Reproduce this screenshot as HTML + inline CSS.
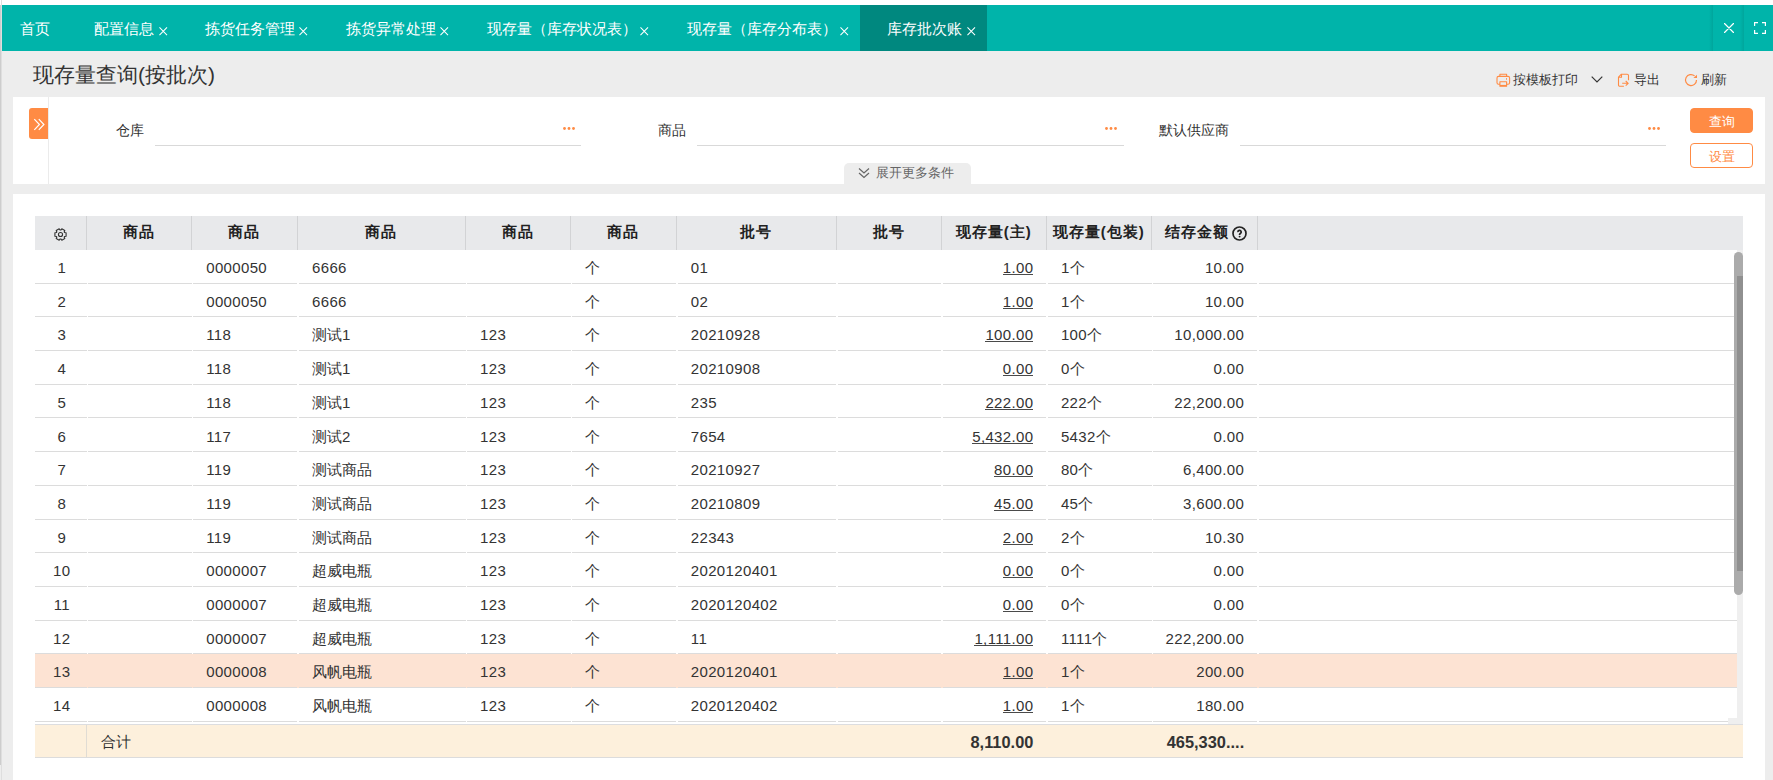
<!DOCTYPE html>
<html><head><meta charset="utf-8">
<style>
*{box-sizing:border-box;margin:0;padding:0}
html,body{width:1773px;height:780px;overflow:hidden;background:#ededed;font-family:"Liberation Sans",sans-serif;color:#333}
.abs{position:absolute}
#topw{left:0;top:0;width:1773px;height:5px;background:#fff}
#edge0{left:0;top:5px;width:1px;height:760px;background:#cdcdcd}
#edge1{left:1px;top:0;width:1px;height:780px;background:#dedede}
#tabs{left:2px;top:5px;width:1771px;height:46px;background:#00b4aa}
.tab{position:absolute;top:1px;height:46px;color:#fff;font-size:15px;line-height:46px;white-space:nowrap}
.tx{position:absolute;top:22px;width:8.5px;height:8.5px}
.act{position:absolute;left:858px;top:0;width:127px;height:46px;background:#00887f}
.sep{position:absolute;top:0;width:4px;height:46px;background:linear-gradient(to right,rgba(0,60,55,0),rgba(0,60,55,0.12))}
#title{left:33px;top:61px;font-size:21px;line-height:28px;color:#333;white-space:nowrap}
.tb{position:absolute;top:71px;font-size:13px;line-height:18px;color:#333;white-space:nowrap}
#filter{left:13px;top:97px;width:1752px;height:87px;background:#fff}
#vline{left:48px;top:97px;width:1px;height:87px;background:#ebebeb}
#obtn{left:29px;top:108px;width:19px;height:31px;background:#ff8b44;border-radius:3px 0 0 3px}
.lbl{position:absolute;top:122px;font-size:13.5px;line-height:18px;color:#333;white-space:nowrap;text-align:right}
.ul{position:absolute;top:145px;height:1px;background:#d9d9d9}
.dots{position:absolute;top:127px;width:12px;height:3px}
.btn{position:absolute;left:1690px;width:63px;height:25px;border-radius:4px;font-size:13px;line-height:25px;text-align:center;border:1px solid #ff8b44}
#q{top:108px;background:#ff8b44;color:#fff}
#s{top:143px;background:#fff;color:#ff8b44}
#more{left:844px;top:163px;width:127px;height:21px;background:#ededed;border-radius:5px 5px 0 0;font-size:12.7px;line-height:20px;color:#666;white-space:nowrap}
#rows{left:0;top:0}
#grid{left:13px;top:194px;width:1752px;height:586px;background:#fff}
#hdr{left:35px;top:216px;width:1708px;height:34px;background:#e8e9eb}
.hc{position:absolute;top:0;height:34px;line-height:32.6px;font-size:15px;font-weight:bold;text-align:center;color:#222;border-right:1px solid #d2d3d5;white-space:nowrap;letter-spacing:1px}
.hc.last{border-right:none}
.row{position:absolute;left:35px;width:1702px;height:33.7px}
.row.hl{background:#fde3d3}
.c{position:absolute;top:0;height:100%;line-height:35.8px;font-size:15px;letter-spacing:0.35px;color:#333;white-space:nowrap;border-bottom:1px solid #dcdcdc}
.c::before{content:"";position:absolute;left:0;bottom:-1px;width:1.5px;height:1px;background:#fff}
.row.hl .c::before{background:#fde3d3}
.c.cc::before{display:none}
.c .k{font-size:15px;letter-spacing:0}
.c.l{padding-left:14.5px}
.c.cc{text-align:center;padding-left:2px}
.c.r{text-align:right;padding-right:13px}
.c u{text-decoration:none;display:inline-block;line-height:12px;border-bottom:1px solid #4a4a4a}
#foot{left:35px;top:724px;width:1708px;height:33.5px;background:#fdf0dc;border-top:1px solid #dcdde0;border-bottom:1px solid #dcdcdc}
.fc{position:absolute;top:0;height:32px;line-height:32px;font-size:15px;color:#333;white-space:nowrap}
.fc.l{padding-left:14.5px}
.fc.r{text-align:right;padding-right:13px}
.fc.b{font-weight:bold;font-size:16.4px;line-height:35px}
.fc.n{line-height:34px}
#fcol{left:86px;top:725px;width:1px;height:32px;background:#e0dcd4}
#track{left:1737px;top:250px;width:6px;height:468px;background:#efefef}
#bump{left:1728px;top:718px;width:15px;height:6px;background:#efefef}
#thumb{left:1734px;top:252px;width:9px;height:343px;background:#ababab;border-radius:4.5px}
#thumbd{left:1737px;top:276px;width:6px;height:295px;background:#909090}
</style></head><body>
<div class="abs" id="topw"></div>
<div class="abs" id="edge0"></div>
<div class="abs" id="edge1"></div>
<div class="abs" id="tabs">
  <div class="act"></div>
  <div class="tab" style="left:18px">首页</div>
  <div class="tab" style="left:92px">配置信息</div>
  <svg class="tx" style="left:157px" viewBox="0 0 9 9"><path d="M0.5 0.5L8.5 8.5M8.5 0.5L0.5 8.5" stroke="#fff" stroke-width="1.1"/></svg>
  <div class="tab" style="left:203px">拣货任务管理</div>
  <svg class="tx" style="left:297px" viewBox="0 0 9 9"><path d="M0.5 0.5L8.5 8.5M8.5 0.5L0.5 8.5" stroke="#fff" stroke-width="1.1"/></svg>
  <div class="tab" style="left:344px">拣货异常处理</div>
  <svg class="tx" style="left:438px" viewBox="0 0 9 9"><path d="M0.5 0.5L8.5 8.5M8.5 0.5L0.5 8.5" stroke="#fff" stroke-width="1.1"/></svg>
  <div class="tab" style="left:485px">现存量（库存状况表）</div>
  <svg class="tx" style="left:638px" viewBox="0 0 9 9"><path d="M0.5 0.5L8.5 8.5M8.5 0.5L0.5 8.5" stroke="#fff" stroke-width="1.1"/></svg>
  <div class="tab" style="left:685px">现存量（库存分布表）</div>
  <svg class="tx" style="left:838px" viewBox="0 0 9 9"><path d="M0.5 0.5L8.5 8.5M8.5 0.5L0.5 8.5" stroke="#fff" stroke-width="1.1"/></svg>
  <div class="tab" style="left:885px">库存批次账</div>
  <svg class="tx" style="left:965px" viewBox="0 0 9 9"><path d="M0.5 0.5L8.5 8.5M8.5 0.5L0.5 8.5" stroke="#fff" stroke-width="1.1"/></svg>
  <div class="sep" style="left:1707px"></div>
  <div class="sep" style="left:1738px"></div>
  <svg style="position:absolute;left:1722px;top:18px" width="10" height="10" viewBox="0 0 10 10"><path d="M0.5 0.5L9.5 9.5M9.5 0.5L0.5 9.5" stroke="#fff" stroke-width="1.2" stroke-linecap="round"/></svg>
  <svg style="position:absolute;left:1752px;top:17px" width="12" height="12" viewBox="0 0 12 12"><path d="M0.6 4V0.6H4M8 0.6h3.4V4M11.4 8v3.4H8M4 11.4H0.6V8" fill="none" stroke="#fff" stroke-width="1.2"/></svg>
</div>
<div class="abs" id="title">现存量查询(按批次)</div>

<svg class="abs" style="left:1495px;top:73px" width="16" height="14" viewBox="0 0 16 14"><path d="M4.9 3.3V1.3h6.7v2M4.9 11.3H3.6a1.6 1.6 0 0 1-1.6-1.6V5a1.6 1.6 0 0 1 1.6-1.6h9.4a1.6 1.6 0 0 1 1.6 1.6v4.7a1.6 1.6 0 0 1-1.6 1.6h-1.4M4.9 8.8h6.7v4.4H4.9z" fill="none" stroke="#ff8b44" stroke-width="1.1" stroke-linejoin="round"/><path d="M5 11.9h6.5v1.3H5z" fill="#ff8b44"/><path d="M11.5 5.2v1.5" stroke="#ff8b44" stroke-width="1"/></svg>
<div class="tb" style="left:1513px">按模板打印</div>
<svg class="abs" style="left:1591px;top:76px" width="12" height="7" viewBox="0 0 12 7"><path d="M0.7 0.7L6 6L11.3 0.7" fill="none" stroke="#333" stroke-width="1.2"/></svg>
<svg class="abs" style="left:1617px;top:73px" width="13" height="14" viewBox="0 0 13 14"><path d="M11.5 7.3V2.5a1.3 1.3 0 0 0-1.3-1.3H4.4L1.5 4.1v7.9a1.2 1.2 0 0 0 1.2 1.2h4.2M4.5 1.4v2.8H1.6M5.2 10.3h6.2M8.7 8l2.5 2.3-2.5 2.3" fill="none" stroke="#ff8b44" stroke-width="1.1" stroke-linejoin="round"/></svg>
<div class="tb" style="left:1634px">导出</div>
<svg class="abs" style="left:1684px;top:73px" width="14" height="14" viewBox="0 0 14 14"><path d="M12.5 7A5.5 5.5 0 1 1 10.6 2.9" fill="none" stroke="#ff8b44" stroke-width="1.2"/><path d="M13 1.8V5.1H9.4z" fill="#ff8b44"/></svg>
<div class="tb" style="left:1701px">刷新</div>

<div class="abs" id="filter"></div>
<div class="abs" id="vline"></div>
<div class="abs" id="obtn"><svg style="position:absolute;left:3.5px;top:10px" width="13" height="13" viewBox="0 0 13 13"><path d="M1.3 1.2L6.4 6.5L1.3 11.8M5.8 1.2L10.9 6.5L5.8 11.8" fill="none" stroke="#fff" stroke-width="1.2"/></svg></div>

<div class="lbl" style="left:100px;width:44px">仓库</div>
<div class="ul" style="left:155px;width:426px"></div>
<svg class="dots" style="left:563px" viewBox="0 0 12 3"><circle cx="1.5" cy="1.5" r="1.4" fill="#ff8b44"/><circle cx="6" cy="1.5" r="1.4" fill="#ff8b44"/><circle cx="10.5" cy="1.5" r="1.4" fill="#ff8b44"/></svg>
<div class="lbl" style="left:642px;width:44px">商品</div>
<div class="ul" style="left:697px;width:427px"></div>
<svg class="dots" style="left:1105px" viewBox="0 0 12 3"><circle cx="1.5" cy="1.5" r="1.4" fill="#ff8b44"/><circle cx="6" cy="1.5" r="1.4" fill="#ff8b44"/><circle cx="10.5" cy="1.5" r="1.4" fill="#ff8b44"/></svg>
<div class="lbl" style="left:1129px;width:100px">默认供应商</div>
<div class="ul" style="left:1240px;width:426px"></div>
<svg class="dots" style="left:1648px" viewBox="0 0 12 3"><circle cx="1.5" cy="1.5" r="1.4" fill="#ff8b44"/><circle cx="6" cy="1.5" r="1.4" fill="#ff8b44"/><circle cx="10.5" cy="1.5" r="1.4" fill="#ff8b44"/></svg>
<div class="btn" id="q">查询</div>
<div class="btn" id="s">设置</div>
<div class="abs" id="more"><svg style="position:absolute;left:14px;top:4px" width="12" height="12" viewBox="0 0 12 12"><path d="M1 1.5L6 6L11 1.5M1 6L6 10.5L11 6" fill="none" stroke="#666" stroke-width="1.2"/></svg><span style="position:absolute;left:32px;top:0">展开更多条件</span></div>

<div class="abs" id="grid"></div>
<div class="abs" id="hdr"><div class="hc" style="left:0.00px;width:52.10px"><svg width="13" height="13" viewBox="0 0 14 14" style="position:absolute;left:19px;top:11.5px"><path d="M11.31 4.90 L13.02 5.16 L13.02 8.84 L11.31 9.10 L10.98 9.68 L11.61 11.30 L8.42 13.14 L7.33 11.79 L6.67 11.79 L5.58 13.14 L2.39 11.30 L3.02 9.68 L2.69 9.10 L0.98 8.84 L0.98 5.16 L2.69 4.90 L3.02 4.32 L2.39 2.70 L5.58 0.86 L6.67 2.21 L7.33 2.21 L8.42 0.86 L11.61 2.70 L10.98 4.32Z" fill="none" stroke="#333" stroke-width="1.2" stroke-linejoin="round"/><circle cx="7" cy="7" r="2.2" fill="none" stroke="#333" stroke-width="1.2"/></svg></div><div class="hc" style="left:51.60px;width:105.60px">商品</div><div class="hc" style="left:156.70px;width:106.30px">商品</div><div class="hc" style="left:262.50px;width:168.50px">商品</div><div class="hc" style="left:430.50px;width:105.50px">商品</div><div class="hc" style="left:535.50px;width:106.30px">商品</div><div class="hc" style="left:641.30px;width:160.60px">批号</div><div class="hc" style="left:801.40px;width:105.60px">批号</div><div class="hc" style="left:906.50px;width:105.40px">现存量(主)</div><div class="hc" style="left:1011.40px;width:105.70px">现存量(包装)</div><div class="hc" style="left:1116.60px;width:106.10px;padding-left:4px">结存金额<svg width="15" height="15" viewBox="0 0 15 15" style="vertical-align:-3px;margin-left:3px;position:relative;top:1px"><circle cx="7.5" cy="7.5" r="6.5" fill="none" stroke="#222" stroke-width="1.7"/><path d="M5.9 6.1a1.65 1.65 0 1 1 2.4 1.4c-.45.25-.7.5-.7 1.05v.35" fill="none" stroke="#222" stroke-width="1.7"/><circle cx="7.6" cy="10.6" r=".95" fill="#222"/></svg></div><div class="hc last" style="left:1222.20px;width:485.80px"></div></div>
<div class="abs" id="rows"><div class="row" style="top:250.00px"><div class="c cc" style="left:0.00px;width:51.60px">1</div><div class="c l" style="left:51.60px;width:105.10px"></div><div class="c l" style="left:156.70px;width:105.80px">0000050</div><div class="c l" style="left:262.50px;width:168.00px">6666</div><div class="c l" style="left:430.50px;width:105.00px"></div><div class="c l" style="left:535.50px;width:105.80px"><span class="k">个</span></div><div class="c l" style="left:641.30px;width:160.10px">01</div><div class="c l" style="left:801.40px;width:105.10px"></div><div class="c r" style="left:906.50px;width:104.90px"><u>1.00</u></div><div class="c l" style="left:1011.40px;width:105.20px">1<span class="k">个</span></div><div class="c r" style="left:1116.60px;width:105.60px">10.00</div><div class="c" style="left:1222.20px;width:479.80px"></div></div>
<div class="row" style="top:283.70px"><div class="c cc" style="left:0.00px;width:51.60px">2</div><div class="c l" style="left:51.60px;width:105.10px"></div><div class="c l" style="left:156.70px;width:105.80px">0000050</div><div class="c l" style="left:262.50px;width:168.00px">6666</div><div class="c l" style="left:430.50px;width:105.00px"></div><div class="c l" style="left:535.50px;width:105.80px"><span class="k">个</span></div><div class="c l" style="left:641.30px;width:160.10px">02</div><div class="c l" style="left:801.40px;width:105.10px"></div><div class="c r" style="left:906.50px;width:104.90px"><u>1.00</u></div><div class="c l" style="left:1011.40px;width:105.20px">1<span class="k">个</span></div><div class="c r" style="left:1116.60px;width:105.60px">10.00</div><div class="c" style="left:1222.20px;width:479.80px"></div></div>
<div class="row" style="top:317.40px"><div class="c cc" style="left:0.00px;width:51.60px">3</div><div class="c l" style="left:51.60px;width:105.10px"></div><div class="c l" style="left:156.70px;width:105.80px">118</div><div class="c l" style="left:262.50px;width:168.00px"><span class="k">测试</span>1</div><div class="c l" style="left:430.50px;width:105.00px">123</div><div class="c l" style="left:535.50px;width:105.80px"><span class="k">个</span></div><div class="c l" style="left:641.30px;width:160.10px">20210928</div><div class="c l" style="left:801.40px;width:105.10px"></div><div class="c r" style="left:906.50px;width:104.90px"><u>100.00</u></div><div class="c l" style="left:1011.40px;width:105.20px">100<span class="k">个</span></div><div class="c r" style="left:1116.60px;width:105.60px">10,000.00</div><div class="c" style="left:1222.20px;width:479.80px"></div></div>
<div class="row" style="top:351.10px"><div class="c cc" style="left:0.00px;width:51.60px">4</div><div class="c l" style="left:51.60px;width:105.10px"></div><div class="c l" style="left:156.70px;width:105.80px">118</div><div class="c l" style="left:262.50px;width:168.00px"><span class="k">测试</span>1</div><div class="c l" style="left:430.50px;width:105.00px">123</div><div class="c l" style="left:535.50px;width:105.80px"><span class="k">个</span></div><div class="c l" style="left:641.30px;width:160.10px">20210908</div><div class="c l" style="left:801.40px;width:105.10px"></div><div class="c r" style="left:906.50px;width:104.90px"><u>0.00</u></div><div class="c l" style="left:1011.40px;width:105.20px">0<span class="k">个</span></div><div class="c r" style="left:1116.60px;width:105.60px">0.00</div><div class="c" style="left:1222.20px;width:479.80px"></div></div>
<div class="row" style="top:384.80px"><div class="c cc" style="left:0.00px;width:51.60px">5</div><div class="c l" style="left:51.60px;width:105.10px"></div><div class="c l" style="left:156.70px;width:105.80px">118</div><div class="c l" style="left:262.50px;width:168.00px"><span class="k">测试</span>1</div><div class="c l" style="left:430.50px;width:105.00px">123</div><div class="c l" style="left:535.50px;width:105.80px"><span class="k">个</span></div><div class="c l" style="left:641.30px;width:160.10px">235</div><div class="c l" style="left:801.40px;width:105.10px"></div><div class="c r" style="left:906.50px;width:104.90px"><u>222.00</u></div><div class="c l" style="left:1011.40px;width:105.20px">222<span class="k">个</span></div><div class="c r" style="left:1116.60px;width:105.60px">22,200.00</div><div class="c" style="left:1222.20px;width:479.80px"></div></div>
<div class="row" style="top:418.50px"><div class="c cc" style="left:0.00px;width:51.60px">6</div><div class="c l" style="left:51.60px;width:105.10px"></div><div class="c l" style="left:156.70px;width:105.80px">117</div><div class="c l" style="left:262.50px;width:168.00px"><span class="k">测试</span>2</div><div class="c l" style="left:430.50px;width:105.00px">123</div><div class="c l" style="left:535.50px;width:105.80px"><span class="k">个</span></div><div class="c l" style="left:641.30px;width:160.10px">7654</div><div class="c l" style="left:801.40px;width:105.10px"></div><div class="c r" style="left:906.50px;width:104.90px"><u>5,432.00</u></div><div class="c l" style="left:1011.40px;width:105.20px">5432<span class="k">个</span></div><div class="c r" style="left:1116.60px;width:105.60px">0.00</div><div class="c" style="left:1222.20px;width:479.80px"></div></div>
<div class="row" style="top:452.20px"><div class="c cc" style="left:0.00px;width:51.60px">7</div><div class="c l" style="left:51.60px;width:105.10px"></div><div class="c l" style="left:156.70px;width:105.80px">119</div><div class="c l" style="left:262.50px;width:168.00px"><span class="k">测试商品</span></div><div class="c l" style="left:430.50px;width:105.00px">123</div><div class="c l" style="left:535.50px;width:105.80px"><span class="k">个</span></div><div class="c l" style="left:641.30px;width:160.10px">20210927</div><div class="c l" style="left:801.40px;width:105.10px"></div><div class="c r" style="left:906.50px;width:104.90px"><u>80.00</u></div><div class="c l" style="left:1011.40px;width:105.20px">80<span class="k">个</span></div><div class="c r" style="left:1116.60px;width:105.60px">6,400.00</div><div class="c" style="left:1222.20px;width:479.80px"></div></div>
<div class="row" style="top:485.90px"><div class="c cc" style="left:0.00px;width:51.60px">8</div><div class="c l" style="left:51.60px;width:105.10px"></div><div class="c l" style="left:156.70px;width:105.80px">119</div><div class="c l" style="left:262.50px;width:168.00px"><span class="k">测试商品</span></div><div class="c l" style="left:430.50px;width:105.00px">123</div><div class="c l" style="left:535.50px;width:105.80px"><span class="k">个</span></div><div class="c l" style="left:641.30px;width:160.10px">20210809</div><div class="c l" style="left:801.40px;width:105.10px"></div><div class="c r" style="left:906.50px;width:104.90px"><u>45.00</u></div><div class="c l" style="left:1011.40px;width:105.20px">45<span class="k">个</span></div><div class="c r" style="left:1116.60px;width:105.60px">3,600.00</div><div class="c" style="left:1222.20px;width:479.80px"></div></div>
<div class="row" style="top:519.60px"><div class="c cc" style="left:0.00px;width:51.60px">9</div><div class="c l" style="left:51.60px;width:105.10px"></div><div class="c l" style="left:156.70px;width:105.80px">119</div><div class="c l" style="left:262.50px;width:168.00px"><span class="k">测试商品</span></div><div class="c l" style="left:430.50px;width:105.00px">123</div><div class="c l" style="left:535.50px;width:105.80px"><span class="k">个</span></div><div class="c l" style="left:641.30px;width:160.10px">22343</div><div class="c l" style="left:801.40px;width:105.10px"></div><div class="c r" style="left:906.50px;width:104.90px"><u>2.00</u></div><div class="c l" style="left:1011.40px;width:105.20px">2<span class="k">个</span></div><div class="c r" style="left:1116.60px;width:105.60px">10.30</div><div class="c" style="left:1222.20px;width:479.80px"></div></div>
<div class="row" style="top:553.30px"><div class="c cc" style="left:0.00px;width:51.60px">10</div><div class="c l" style="left:51.60px;width:105.10px"></div><div class="c l" style="left:156.70px;width:105.80px">0000007</div><div class="c l" style="left:262.50px;width:168.00px"><span class="k">超威电瓶</span></div><div class="c l" style="left:430.50px;width:105.00px">123</div><div class="c l" style="left:535.50px;width:105.80px"><span class="k">个</span></div><div class="c l" style="left:641.30px;width:160.10px">2020120401</div><div class="c l" style="left:801.40px;width:105.10px"></div><div class="c r" style="left:906.50px;width:104.90px"><u>0.00</u></div><div class="c l" style="left:1011.40px;width:105.20px">0<span class="k">个</span></div><div class="c r" style="left:1116.60px;width:105.60px">0.00</div><div class="c" style="left:1222.20px;width:479.80px"></div></div>
<div class="row" style="top:587.00px"><div class="c cc" style="left:0.00px;width:51.60px">11</div><div class="c l" style="left:51.60px;width:105.10px"></div><div class="c l" style="left:156.70px;width:105.80px">0000007</div><div class="c l" style="left:262.50px;width:168.00px"><span class="k">超威电瓶</span></div><div class="c l" style="left:430.50px;width:105.00px">123</div><div class="c l" style="left:535.50px;width:105.80px"><span class="k">个</span></div><div class="c l" style="left:641.30px;width:160.10px">2020120402</div><div class="c l" style="left:801.40px;width:105.10px"></div><div class="c r" style="left:906.50px;width:104.90px"><u>0.00</u></div><div class="c l" style="left:1011.40px;width:105.20px">0<span class="k">个</span></div><div class="c r" style="left:1116.60px;width:105.60px">0.00</div><div class="c" style="left:1222.20px;width:479.80px"></div></div>
<div class="row" style="top:620.70px"><div class="c cc" style="left:0.00px;width:51.60px">12</div><div class="c l" style="left:51.60px;width:105.10px"></div><div class="c l" style="left:156.70px;width:105.80px">0000007</div><div class="c l" style="left:262.50px;width:168.00px"><span class="k">超威电瓶</span></div><div class="c l" style="left:430.50px;width:105.00px">123</div><div class="c l" style="left:535.50px;width:105.80px"><span class="k">个</span></div><div class="c l" style="left:641.30px;width:160.10px">11</div><div class="c l" style="left:801.40px;width:105.10px"></div><div class="c r" style="left:906.50px;width:104.90px"><u>1,111.00</u></div><div class="c l" style="left:1011.40px;width:105.20px">1111<span class="k">个</span></div><div class="c r" style="left:1116.60px;width:105.60px">222,200.00</div><div class="c" style="left:1222.20px;width:479.80px"></div></div>
<div class="row hl" style="top:654.40px"><div class="c cc" style="left:0.00px;width:51.60px">13</div><div class="c l" style="left:51.60px;width:105.10px"></div><div class="c l" style="left:156.70px;width:105.80px">0000008</div><div class="c l" style="left:262.50px;width:168.00px"><span class="k">风帆电瓶</span></div><div class="c l" style="left:430.50px;width:105.00px">123</div><div class="c l" style="left:535.50px;width:105.80px"><span class="k">个</span></div><div class="c l" style="left:641.30px;width:160.10px">2020120401</div><div class="c l" style="left:801.40px;width:105.10px"></div><div class="c r" style="left:906.50px;width:104.90px"><u>1.00</u></div><div class="c l" style="left:1011.40px;width:105.20px">1<span class="k">个</span></div><div class="c r" style="left:1116.60px;width:105.60px">200.00</div><div class="c" style="left:1222.20px;width:479.80px"></div></div>
<div class="row" style="top:688.10px"><div class="c cc" style="left:0.00px;width:51.60px">14</div><div class="c l" style="left:51.60px;width:105.10px"></div><div class="c l" style="left:156.70px;width:105.80px">0000008</div><div class="c l" style="left:262.50px;width:168.00px"><span class="k">风帆电瓶</span></div><div class="c l" style="left:430.50px;width:105.00px">123</div><div class="c l" style="left:535.50px;width:105.80px"><span class="k">个</span></div><div class="c l" style="left:641.30px;width:160.10px">2020120402</div><div class="c l" style="left:801.40px;width:105.10px"></div><div class="c r" style="left:906.50px;width:104.90px"><u>1.00</u></div><div class="c l" style="left:1011.40px;width:105.20px">1<span class="k">个</span></div><div class="c r" style="left:1116.60px;width:105.60px">180.00</div><div class="c" style="left:1222.20px;width:479.80px"></div></div></div>
<div class="abs" id="foot"><div class="fc l" style="left:0.00px;width:51.60px"></div><div class="fc l n" style="left:51.60px;width:105.10px">合计</div><div class="fc l" style="left:156.70px;width:105.80px"></div><div class="fc l" style="left:262.50px;width:168.00px"></div><div class="fc l" style="left:430.50px;width:105.00px"></div><div class="fc l" style="left:535.50px;width:105.80px"></div><div class="fc l" style="left:641.30px;width:160.10px"></div><div class="fc l" style="left:801.40px;width:105.10px"></div><div class="fc r b" style="left:906.50px;width:104.90px">8,110.00</div><div class="fc l" style="left:1011.40px;width:105.20px"></div><div class="fc r b" style="left:1116.60px;width:105.60px">465,330....</div><div class="fc" style="left:1222.20px;width:485.80px"></div></div>
<div class="abs" id="fcol"></div>
<div class="abs" id="track"></div>
<div class="abs" id="bump"></div>
<div class="abs" id="thumb"></div>
<div class="abs" id="thumbd"></div>
</body></html>
